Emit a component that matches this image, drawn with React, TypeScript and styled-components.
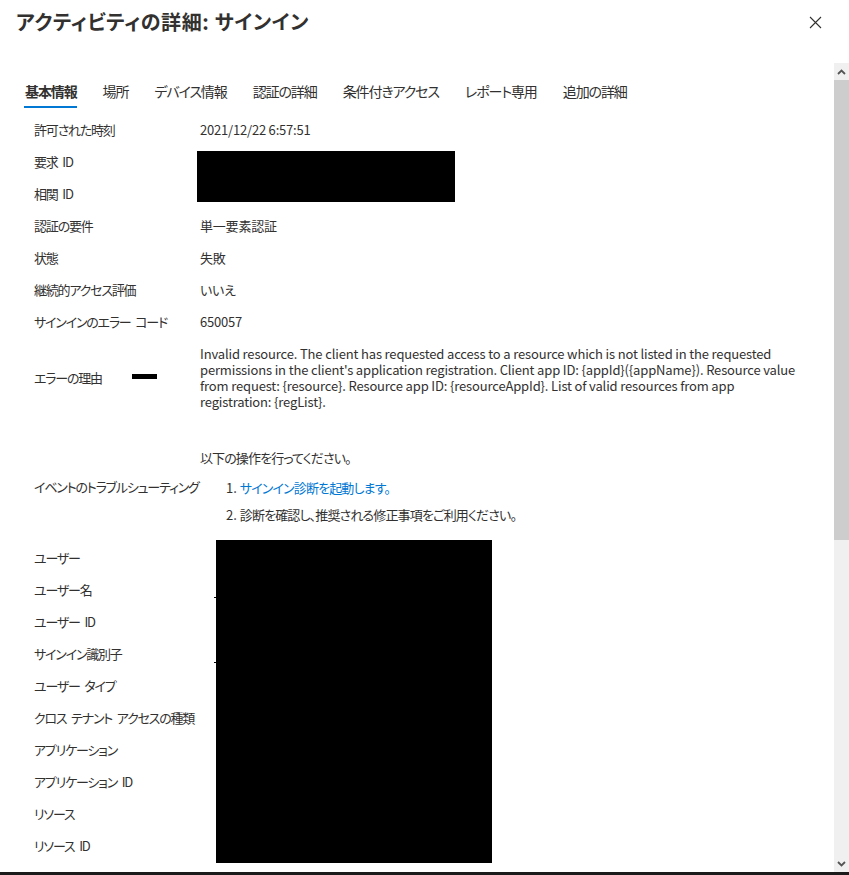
import styled, { createGlobalStyle } from "styled-components";

const GlobalStyle = createGlobalStyle`
  body {
    margin: 0;
    background: #ffffff;
    font-family: "Noto Sans CJK JP", "Noto Sans", sans-serif;
    font-feature-settings: "palt";
    color: #323130;
  }
`;

type RowData = { label: string; value?: string };

const topRows: RowData[] = [
  { label: "許可された時刻", value: "2021/12/22 6:57:51" },
  { label: "要求 ID" },
  { label: "相関 ID" },
  { label: "認証の要件", value: "単一要素認証" },
  { label: "状態", value: "失敗" },
  { label: "継続的アクセス評価", value: "いいえ" },
  { label: "サインインのエラー コード", value: "650057" },
];

const userRows: RowData[] = [
  { label: "ユーザー" },
  { label: "ユーザー名" },
  { label: "ユーザー ID" },
  { label: "サインイン識別子" },
  { label: "ユーザー タイプ" },
  { label: "クロス テナント アクセスの種類" },
  { label: "アプリケーション" },
  { label: "アプリケーション ID" },
  { label: "リソース" },
  { label: "リソース ID" },
  { label: "リソース テナント ID" },
];

const tabs = [
  "基本情報",
  "場所",
  "デバイス情報",
  "認証の詳細",
  "条件付きアクセス",
  "レポート専用",
  "追加の詳細",
];

const errorText =
  "Invalid resource. The client has requested access to a resource which is not listed in the requested permissions in the client's application registration. Client app ID: {appId}({appName}). Resource value from request: {resource}. Resource app ID: {resourceAppId}. List of valid resources from app registration: {regList}.";

function Chevron({ down }: { down?: boolean }) {
  return (
    <svg width="9" height="6" viewBox="0 0 9 6">
      <polyline
        points={down ? "1,1 4.5,4.5 8,1" : "1,5 4.5,1.5 8,5"}
        fill="none"
        stroke="#555"
        strokeWidth="1.8"
      />
    </svg>
  );
}

export default function App() {
  return (
    <>
      <GlobalStyle />
      <Page>
        <Header>
          <Title>アクティビティの詳細: サインイン</Title>
          <CloseButton aria-label="閉じる">
            <svg width="13" height="13" viewBox="0 0 13 13">
              <path d="M1 1 L12 12 M12 1 L1 12" stroke="#323130" strokeWidth="1.1" />
            </svg>
          </CloseButton>
        </Header>
        <Main>
          <Content>
            <TabBar>
              {tabs.map((t, i) => (
                <Tab key={t} $active={i === 0}>
                  {t}
                </Tab>
              ))}
            </TabBar>
            <Rows>
              {topRows.map((r) => (
                <Row key={r.label}>
                  <Label>{r.label}</Label>
                  <Value>{r.value}</Value>
                </Row>
              ))}
              <Row $pad="8px 0 12px">
                <Label>エラーの理由</Label>
                <Paragraph>{errorText}</Paragraph>
              </Row>
              <Row $pad="28px 0 19px">
                <Label>イベントのトラブルシューティング</Label>
                <Value>
                  <Note>以下の操作を行ってください。</Note>
                  <Steps>
                    <li>
                      <StepText>
                        <Link href="#">サインイン診断を起動します。</Link>
                      </StepText>
                    </li>
                    <li>
                      <StepText>診断を確認し、推奨される修正事項をご利用ください。</StepText>
                    </li>
                  </Steps>
                </Value>
              </Row>
              {userRows.map((r) => (
                <Row key={r.label}>
                  <Label>{r.label}</Label>
                  <Value>{r.value}</Value>
                </Row>
              ))}
            </Rows>
            <Redaction $left={197} $top={88} $width={258} $height={51} />
            <Redaction $left={132} $top={311} $width={25} $height={5} />
            <Redaction $left={216} $top={477} $width={276} $height={323} />
            <Redaction $left={214} $top={534} $width={2} $height={1} />
            <Redaction $left={214} $top={599} $width={2} $height={1} />
          </Content>
          <Scrollbar>
            <ScrollButton>
              <Chevron />
            </ScrollButton>
            <Thumb />
            <Track />
            <ScrollButton>
              <Chevron down />
            </ScrollButton>
          </Scrollbar>
        </Main>
      </Page>
    </>
  );
}

const Page = styled.div`
  width: 849px;
  height: 875px;
  box-sizing: border-box;
  display: flex;
  flex-direction: column;
  overflow: hidden;
  border-bottom: 3px solid #1b1b1b;
`;

const Header = styled.header`
  height: 63px;
  flex: none;
  box-sizing: border-box;
  display: flex;
  align-items: flex-start;
  justify-content: space-between;
  padding: 7px 22px 0 16px;
`;

const Title = styled.h1`
  margin: 0;
  font-size: 20px;
  line-height: 30px;
  font-weight: 600;
  letter-spacing: 0.6px;
  color: #323130;
`;

const CloseButton = styled.button`
  display: flex;
  align-items: center;
  justify-content: center;
  width: 24px;
  height: 24px;
  margin-top: 3px;
  padding: 0;
  border: none;
  background: none;
`;

const Main = styled.div`
  flex: 1;
  display: flex;
  min-height: 0;
`;

const Content = styled.div`
  position: relative;
  flex: 1;
  overflow: hidden;
`;

const TabBar = styled.nav`
  display: flex;
  gap: 25px;
  padding: 18px 0 0 24px;
`;

const Tab = styled.div<{ $active?: boolean }>`
  font-size: 14px;
  line-height: 20px;
  padding: 0 0 5px 1px;
  letter-spacing: -1.1px;
  white-space: nowrap;
  font-weight: ${(p) => (p.$active ? 700 : 400)};
  color: #323130;
  border-bottom: 2px solid ${(p) => (p.$active ? "#0078d4" : "transparent")};
`;

const Rows = styled.div`
  display: flex;
  flex-direction: column;
  margin-top: 6px;
  padding-left: 34px;
`;

const Row = styled.div<{ $pad?: string }>`
  display: flex;
  align-items: center;
  min-height: 32px;
  box-sizing: border-box;
  padding: ${(p) => p.$pad ?? "0"};
  font-size: 13px;
  line-height: 16px;
`;

const Label = styled.div`
  width: 166px;
  flex: none;
  white-space: nowrap;
  letter-spacing: -1.2px;
  word-spacing: 3px;
`;

const Value = styled.div`
  width: 600px;
  letter-spacing: -0.2px;
`;

const Paragraph = styled.p`
  margin: 0;
  width: 600px;
  line-height: 16px;
  letter-spacing: -0.15px;
`;

const Note = styled.p`
  margin: 0;
  letter-spacing: -0.9px;
`;

const Steps = styled.ol`
  margin: 14px 0 0;
  padding-left: 26px;
  list-style-position: inside;
  letter-spacing: 0;

  li {
    line-height: 16px;
  }
  li + li {
    margin-top: 11px;
  }
`;

const StepText = styled.span`
  letter-spacing: -0.85px;
`;

const Link = styled.a`
  color: #0078d4;
  text-decoration: none;
`;

const Redaction = styled.div<{
  $left: number;
  $top: number;
  $width: number;
  $height: number;
}>`
  position: absolute;
  left: ${(p) => p.$left}px;
  top: ${(p) => p.$top}px;
  width: ${(p) => p.$width}px;
  height: ${(p) => p.$height}px;
  background: #000000;
`;

const Scrollbar = styled.div`
  width: 15px;
  flex: none;
  display: flex;
  flex-direction: column;
  background: #f0f0f0;
`;

const ScrollButton = styled.div`
  height: 17px;
  flex: none;
  display: flex;
  align-items: center;
  justify-content: center;
`;

const Thumb = styled.div`
  height: 460px;
  flex: none;
  background: #cdcdcd;
`;

const Track = styled.div`
  flex: 1;
`;
